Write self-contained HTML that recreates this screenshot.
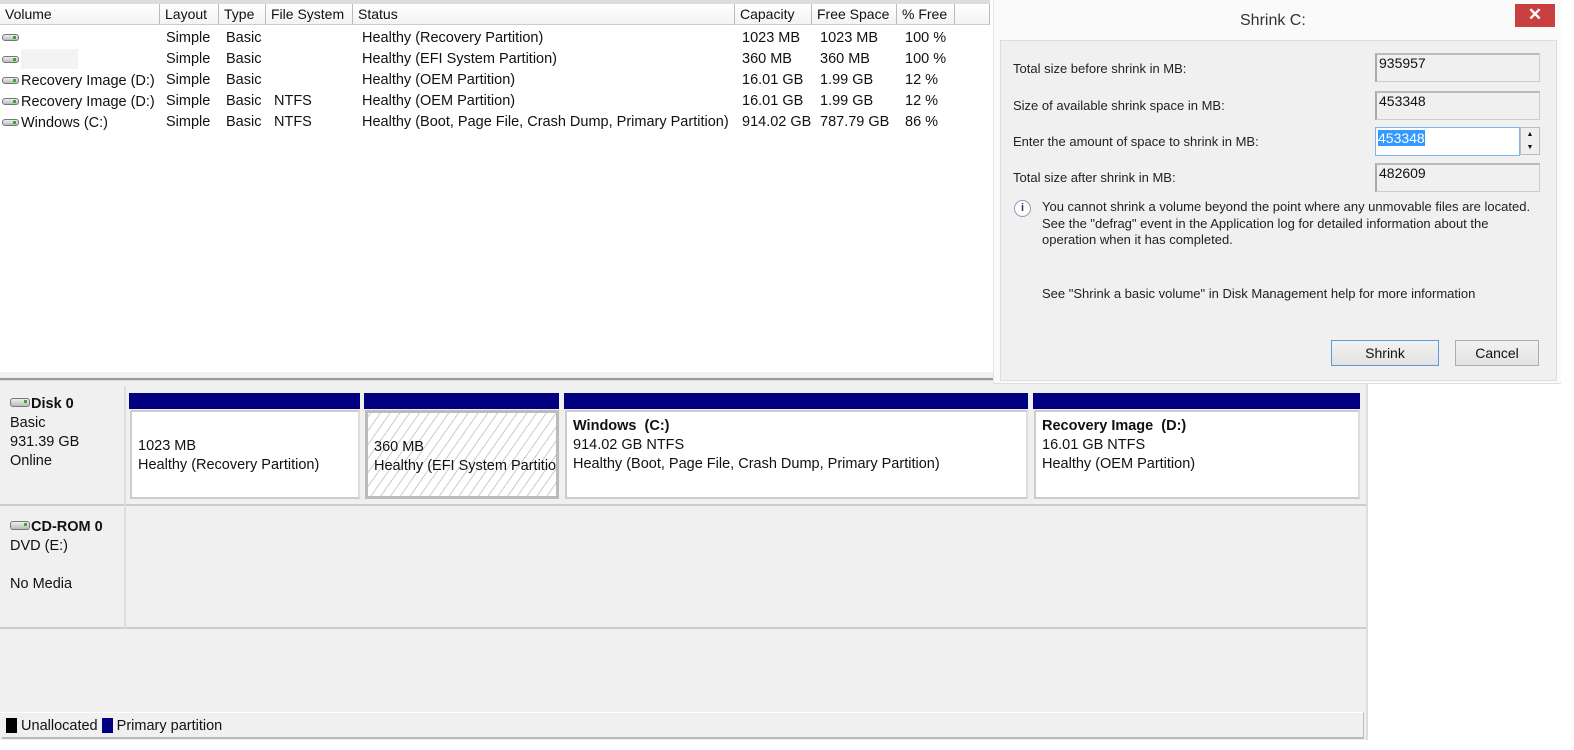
<!DOCTYPE html>
<html><head><meta charset="utf-8"><style>
*{margin:0;padding:0;box-sizing:border-box}
body{width:1574px;height:750px;background:#fff;font-family:"Liberation Sans",sans-serif;font-size:14.5px;color:#111;position:relative;overflow:hidden}
.a{position:absolute;white-space:nowrap}
.hd{position:absolute;top:4px;height:21px;border-right:1px solid #bbb;border-bottom:1px solid #ccc;background:linear-gradient(#fff,#f3f3f3);padding:2px 5px;font-size:14px;white-space:nowrap;overflow:hidden}
.ic{display:inline-block;width:17px;height:7px;border:1px solid #777;border-radius:3px;background:linear-gradient(#eee,#bbb);margin-right:2px;vertical-align:1px;position:relative}
.ic:after{content:"";position:absolute;right:2px;top:1px;width:3px;height:3px;background:#3a3}
.bar{position:absolute;top:393px;height:16px;background:#000080}
.box{position:absolute;top:410px;height:89px;background:#fff;border:2px solid #ccc;border-right-color:#ddd;padding:5px 6px;line-height:19px;font-size:14.5px;white-space:nowrap;overflow:hidden}
.dlg{font-size:13px;color:#222}
.fld{position:absolute;left:1375px;width:165px;height:29px;border:1px solid #ccc;border-left:2px solid #aaa;border-top:2px solid #bbb;background:#f0f0f0;padding:0 2px;font-size:14px}
.btn{position:absolute;top:340px;height:26px;border:1px solid #adadad;background:linear-gradient(#f2f2f2,#e2e2e2);text-align:center;line-height:24px;font-size:14px}
</style></head><body>
<div class="a" style="left:0;top:0;width:990px;height:4px;background:#ddd"></div>
<div class="hd" style="left:0;width:160px">Volume</div>
<div class="hd" style="left:160px;width:59px">Layout</div>
<div class="hd" style="left:219px;width:47px">Type</div>
<div class="hd" style="left:266px;width:87px">File System</div>
<div class="hd" style="left:353px;width:382px">Status</div>
<div class="hd" style="left:735px;width:77px">Capacity</div>
<div class="hd" style="left:812px;width:85px">Free Space</div>
<div class="hd" style="left:897px;width:58px">% Free</div>
<div class="hd" style="left:955px;width:35px"></div>
<div class="a" style="left:1366px;top:0;width:2px;height:740px;background:#ddd"></div>

<div class="a" style="left:2px;top:28px;line-height:21px">
<div><span class="ic"></span></div>
<div><span class="ic"></span><span style="display:inline-block;width:57px;height:20px;background:#f3f3f3;vertical-align:-5px"></span></div>
<div><span class="ic"></span>Recovery Image (D:)</div>
<div><span class="ic"></span>Recovery Image (D:)</div>
<div><span class="ic"></span>Windows (C:)</div>
</div>
<div class="a" style="left:166px;top:28px;line-height:21px">Simple<br>Simple<br>Simple<br>Simple<br>Simple</div>
<div class="a" style="left:226px;top:28px;line-height:21px">Basic<br>Basic<br>Basic<br>Basic<br>Basic</div>
<div class="a" style="left:274px;top:28px;line-height:21px"><br><br><br>NTFS<br>NTFS</div>
<div class="a" style="left:362px;top:28px;line-height:21px">Healthy (Recovery Partition)<br>Healthy (EFI System Partition)<br>Healthy (OEM Partition)<br>Healthy (OEM Partition)<br>Healthy (Boot, Page File, Crash Dump, Primary Partition)</div>
<div class="a" style="left:742px;top:28px;line-height:21px">1023 MB<br>360 MB<br>16.01 GB<br>16.01 GB<br>914.02 GB</div>
<div class="a" style="left:820px;top:28px;line-height:21px">1023 MB<br>360 MB<br>1.99 GB<br>1.99 GB<br>787.79 GB</div>
<div class="a" style="left:905px;top:28px;line-height:21px">100 %<br>100 %<br>12 %<br>12 %<br>86 %</div>

<div class="a" style="left:0;top:372px;width:1366px;height:368px;background:#f0f0f0"></div>
<div class="a" style="left:0;top:378px;width:1366px;height:3px;background:#999;border-bottom:1px solid #ddd"></div>
<div class="a" style="left:0;top:386px;width:126px;height:120px;border-right:2px solid #ddd;border-bottom:2px solid #ccc;padding:9px 10px;line-height:19px">
<div style="font-weight:bold"><span class="ic" style="width:20px;height:9px;margin-right:1px"></span>Disk 0</div>Basic<br>931.39 GB<br>Online</div>
<div class="a" style="left:126px;top:504px;width:1240px;height:2px;background:#ccc"></div>
<div class="a" style="left:0;top:507px;width:126px;height:122px;border-right:2px solid #ddd;border-bottom:2px solid #ccc;padding:11px 10px;line-height:19px">
<div style="font-weight:bold"><span class="ic" style="width:20px;height:9px;margin-right:1px"></span>CD-ROM 0</div>DVD (E:)<br><br>No Media</div>
<div class="a" style="left:126px;top:627px;width:1240px;height:2px;background:#ccc"></div>

<div class="bar" style="left:129px;width:231px"></div>
<div class="bar" style="left:364px;width:195px"></div>
<div class="bar" style="left:564px;width:464px"></div>
<div class="bar" style="left:1033px;width:327px"></div>
<div class="box" style="left:130px;width:230px;padding-top:25px">1023 MB<br>Healthy (Recovery Partition)</div>
<div class="box" style="left:365px;width:194px;padding-top:25px;border:3px solid #bbb;background:repeating-linear-gradient(-55deg,#fff 0 7px,#ccc 7px 8px)">360 MB<br>Healthy (EFI System Partitio</div>
<div class="box" style="left:565px;width:463px"><b>Windows&nbsp; (C:)</b><br>914.02 GB NTFS<br>Healthy (Boot, Page File, Crash Dump, Primary Partition)</div>
<div class="box" style="left:1034px;width:326px"><b>Recovery Image&nbsp; (D:)</b><br>16.01 GB NTFS<br>Healthy (OEM Partition)</div>

<div class="a" style="left:2px;top:712px;width:1362px;height:27px;border-top:1px solid #fff;border-bottom:2px solid #bbb;border-right:1px solid #bbb;padding:5px 4px;font-size:14.5px">
<span style="display:inline-block;width:11px;height:15px;background:#000;vertical-align:-3px"></span> Unallocated <span style="display:inline-block;width:11px;height:15px;background:#000080;vertical-align:-3px"></span> Primary partition</div>

<div class="a dlg" style="left:993px;top:0;width:568px;height:384px;background:#fafafa;border-left:1px solid #e5e5e5;border-bottom:1px solid #ddd"></div>
<div class="a" style="left:1240px;top:12px;font-size:16px;color:#333">Shrink C:</div>
<div class="a" style="left:1515px;top:4px;width:40px;height:23px;background:#c94040;color:#fff;text-align:center;font-size:17px;line-height:22px;font-weight:bold">✕</div>
<div class="a" style="left:1000px;top:40px;width:557px;height:341px;background:#f0f0f0;border:1px solid #ddd"></div>
<div class="a dlg" style="left:1013px;top:61px">Total size before shrink in MB:</div>
<div class="a dlg" style="left:1013px;top:98px">Size of available shrink space in MB:</div>
<div class="a dlg" style="left:1013px;top:134px">Enter the amount of space to shrink in MB:</div>
<div class="a dlg" style="left:1013px;top:170px">Total size after shrink in MB:</div>
<div class="fld" style="top:53px">935957</div>
<div class="fld" style="top:91px">453348</div>
<div class="fld" style="top:127px;background:#fff;border:1px solid #7eb4ea;width:145px;padding-top:2px"><span style="background:#3399ff;color:#fff">453348</span></div>
<div class="a" style="left:1520px;top:127px;width:20px;height:28px;border:1px solid #bbb;background:#eee;font-size:7px;text-align:center;line-height:13px">▲<br>▼</div>
<div class="fld" style="top:163px">482609</div>
<div class="a" style="left:1014px;top:200px;width:17px;height:17px;border:1px solid #99a;border-radius:50%;background:#fff;color:#336;font-size:11px;text-align:center;line-height:15px;font-weight:bold">i</div>
<div class="a dlg" style="left:1042px;top:199px;line-height:16.5px">You cannot shrink a volume beyond the point where any unmovable files are located.<br>See the "defrag" event in the Application log for detailed information about the<br>operation when it has completed.</div>
<div class="a dlg" style="left:1042px;top:286px">See "Shrink a basic volume" in Disk Management help for more information</div>
<div class="btn" style="left:1331px;width:108px;border-color:#5e9bd8">Shrink</div>
<div class="btn" style="left:1455px;width:84px">Cancel</div>
</body></html>
